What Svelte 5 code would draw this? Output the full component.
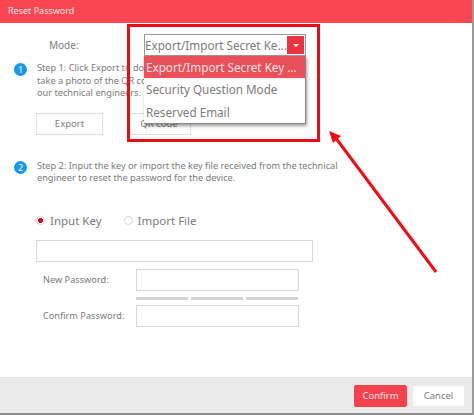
<script>
  const menu = ['Export/Import Secret Key ...', 'Security Question Mode', 'Reserved Email'];
</script>

<div class="dialog">
  <header>Reset Password</header>
  <main>
    <div class="mode">
      <span class="mode-label">Mode:</span>
      <div class="select">
        <span>Export/Import Secret Ke...</span>
        <span class="caret"><i></i></span>
        <ul>
          {#each menu as item, i}
            <li class:on={i === 0}>{item}</li>
          {/each}
        </ul>
      </div>
    </div>

    <section class="step one">
      <b class="num">1</b>
      <div>
        <p>Step 1: Click Export to download the key file or<br />take a photo of the QR code, and send the key file or photo to<br />our technical engineers.</p>
        <div class="btns">
          <button>Export</button>
          <button class="qr">QR code</button>
        </div>
      </div>
    </section>

    <section class="step two">
      <b class="num">2</b>
      <p>Step 2: Input the key or import the key file received from the technical<br />engineer to reset the password for the device.</p>
    </section>

    <div class="radios">
      <label><i class="radio sel"></i>Input Key</label>
      <label><i class="radio"></i>Import File</label>
    </div>
    <div class="key"></div>
    <div class="row"><span>New Password:</span><div class="field"></div></div>
    <div class="bars"><i></i><i></i><i></i></div>
    <div class="row"><span>Confirm Password:</span><div class="field"></div></div>
  </main>
  <footer>
    <button class="primary">Confirm</button>
    <button>Cancel</button>
  </footer>

  <div class="callout"></div>
  <svg class="arrow" viewBox="0 0 474 415" width="474" height="415" aria-hidden="true">
    <line x1="436" y1="272" x2="335" y2="137" stroke="#f00a14" stroke-width="3" />
    <path d="M329 131 L341 136 L333 143 Z" fill="#f00a14" />
  </svg>
</div>

<style>
  :global(body) {
    margin: 0;
    background: #fff;
  }
  .dialog {
    position: relative;
    box-sizing: border-box;
    width: 474px;
    height: 415px;
    display: flex;
    flex-direction: column;
    border-right: 2px solid #9a9a9a;
    border-bottom: 2px solid #8f8f8f;
    font-family: "Noto Sans", "Open Sans", sans-serif;
    color: #7b7b7b;
    overflow: hidden;
  }
  header {
    height: 23px;
    flex: none;
    background: #fb4651;
    color: #ffe3e3;
    font-size: 9px;
    line-height: 22px;
    padding-left: 8px;
  }
  main {
    flex: 1;
    min-height: 0;
  }
  .mode {
    display: flex;
    align-items: center;
    padding: 11px 0 0 49px;
    font-size: 10px;
  }
  .mode-label {
    width: 95px;
  }
  .select {
    position: relative;
    box-sizing: border-box;
    width: 162px;
    height: 22px;
    border: 1px solid #9a9a9a;
    display: flex;
    align-items: center;
    justify-content: space-between;
    padding: 0 1px 0 0;
    font-size: 11.700px;
    white-space: nowrap;
    z-index: 2;
    background: #fff;
  }
  .caret {
    flex: none;
    width: 17px;
    height: 18px;
    background: #ee3340;
    display: flex;
    align-items: center;
    justify-content: center;
  }
  .caret i {
    border: 3px solid transparent;
    border-top: 3px solid #fff;
    border-bottom: 0;
  }
  ul {
    position: absolute;
    left: -1px;
    top: 21px;
    width: 162px;
    margin: 0;
    padding: 0;
    list-style: none;
    background: #fff;
    border-right: 1px solid #8a8a8a;
    border-bottom: 1px solid #8a8a8a;
    box-shadow: 1px 2px 3px rgba(0, 0, 0, 0.4);
    box-sizing: border-box;
    height: 68px;
  }
  li {
    height: 22.300px;
    line-height: 22.300px;
    padding-left: 2px;
    font-size: 11.700px;
  }
  li.on {
    background: #e9505a;
    color: #fde4e4;
  }
  .step {
    display: flex;
    position: relative;
    padding-left: 14px;
    font-size: 9.200px;
    line-height: 12.500px;
  }
  .step p {
    margin: 0;
    white-space: nowrap;
  }
  .step.one {
    margin-top: 6px;
  }
  .step.two {
    margin-top: 25px;
  }
  .num {
    flex: none;
    width: 13px;
    height: 13px;
    margin: 1px 10px 0 0;
    border-radius: 50%;
    background: #1a96f0;
    color: #fff;
    font-size: 9px;
    font-weight: 400;
    line-height: 13px;
    text-align: center;
  }
  .btns {
    display: flex;
    gap: 24px;
    margin-top: 13px;
    margin-left: -1px;
  }
  button {
    box-sizing: border-box;
    width: 67px;
    height: 22px;
    border: 1px solid #dcdcdc;
    background: #fff;
    color: #7b7b7b;
    font: 9.500px "Noto Sans", "Open Sans", sans-serif;
    padding: 0;
  }
  .qr {
    width: 64px;
  }
  .radios {
    display: flex;
    gap: 22px;
    margin: 28px 0 0 36px;
    height: 16px;
    align-items: center;
    font-size: 11.500px;
  }
  label {
    display: flex;
    align-items: center;
    gap: 5px;
  }
  .radio {
    box-sizing: border-box;
    width: 9px;
    height: 9px;
    border-radius: 50%;
    border: 1px solid #d8d8d8;
    background: #fff;
  }
  .radio.sel {
    border-color: #f0c4c8;
    background: radial-gradient(circle, #c8102e 0 2.200px, #fff 2.800px);
  }
  .key {
    box-sizing: border-box;
    width: 277px;
    height: 22px;
    margin: 11px 0 0 36px;
    border: 1px solid #d8d8d8;
  }
  .row {
    display: flex;
    align-items: center;
    margin: 7px 0 0 43px;
    font-size: 9.200px;
  }
  .row span {
    width: 93px;
  }
  .field {
    box-sizing: border-box;
    width: 163px;
    height: 22px;
    border: 1px solid #d8d8d8;
  }
  .bars {
    display: flex;
    gap: 3px;
    margin: 6px 0 0 136px;
    height: 3px;
  }
  .bars i {
    width: 52px;
    background: #d2d2d2;
  }
  .bars + .row {
    margin-top: 5px;
  }
  footer {
    flex: none;
    height: 36px;
    background: #ebebeb;
    display: flex;
    justify-content: flex-end;
    align-items: center;
    gap: 5px;
    padding: 0 7px 0 0;
    border-top: 1px solid #e4e4e4;
    box-sizing: border-box;
  }
  footer button {
    width: 53px;
    height: 22px;
    border-radius: 2px;
    border-color: #eaeaea;
  }
  footer .primary {
    background: #f8434e;
    border-color: #f8434e;
    color: #ffe3e3;
  }
  .callout {
    position: absolute;
    left: 127px;
    top: 24px;
    width: 193px;
    height: 118px;
    box-sizing: border-box;
    border: 3px solid #ee0a14;
    z-index: 3;
    pointer-events: none;
  }
  .arrow {
    position: absolute;
    left: 0;
    top: 0;
    z-index: 3;
    pointer-events: none;
  }
</style>
